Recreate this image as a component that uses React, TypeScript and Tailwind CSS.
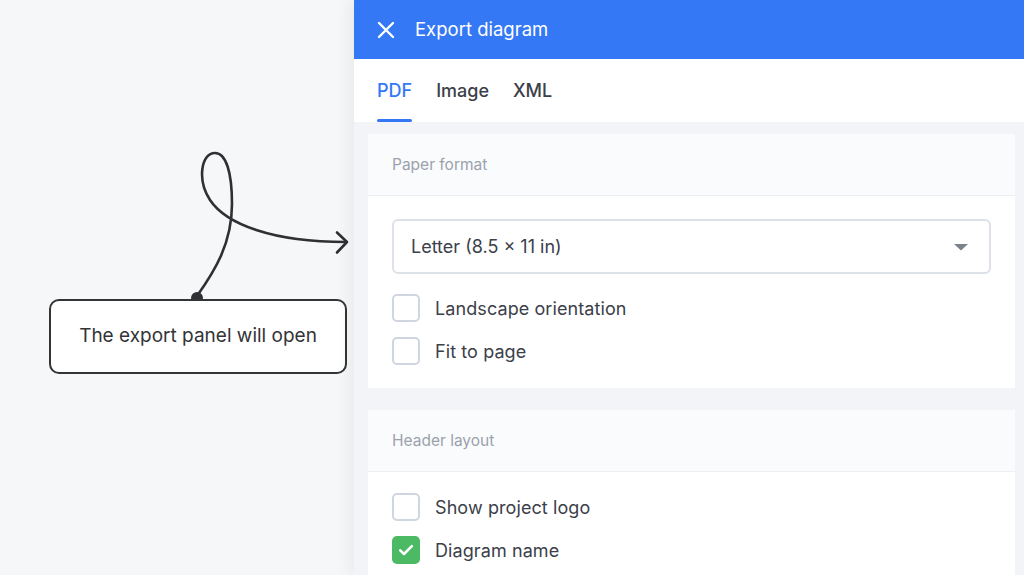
import React from "react";

function Checkbox({ checked = false, label }: { checked?: boolean; label: string }) {
  return (
    <label className="flex items-center gap-[15px] h-[28px]">
      {checked ? (
        <span className="w-[28px] h-[28px] rounded-[5px] bg-[#4cb964] flex items-center justify-center">
          <svg width="18" height="18" viewBox="0 0 18 18" fill="none">
            <path d="M3.2 9.4l3.8 3.6L14.8 5.2" stroke="#fff" strokeWidth="2.6" strokeLinecap="round" strokeLinejoin="round" />
          </svg>
        </span>
      ) : (
        <span className="w-[28px] h-[28px] rounded-[5px] border-2 border-[#cfd6df] bg-white" />
      )}
      <span className="text-[18px] text-[#3b4049] tracking-[0.005em]">{label}</span>
    </label>
  );
}

function Card({ title, children, tight = false }: { title: string; children: React.ReactNode; tight?: boolean }) {
  return (
    <section className="bg-white">
      <div className="h-[62px] px-6 flex items-center bg-[#fafbfc] border-b border-[#eceff3] text-[15.5px] text-[#9aa2ad]">
        {title}
      </div>
      <div className={tight ? "px-6 pt-[21px] pb-[24px]" : "px-6 pt-[23px] pb-[23px]"}>{children}</div>
    </section>
  );
}

export default function App() {
  return (
    <div className="w-[1024px] h-[575px] overflow-hidden flex bg-[#f6f7f9]" style={{ fontFamily: "Inter, 'Noto Sans', sans-serif" }}>
      <div className="relative w-[354px] shrink-0">
        <svg className="absolute left-0 top-0" width="354" height="575" viewBox="0 0 354 575" fill="none">
          <path
            d="M197 296 C 214 272, 232 244, 232 204 C 232 172, 226 153, 215 153 C 201 153, 197 180, 210 200 C 226 224, 272 242, 346 242"
            stroke="#2f3033"
            strokeWidth="2.6"
            strokeLinecap="round"
          />
          <path d="M337 232.5 L347 242 L337 252.5" stroke="#2f3033" strokeWidth="2.6" strokeLinecap="round" strokeLinejoin="round" />
          <circle cx="197" cy="298" r="6" fill="#2f3033" />
        </svg>
        <div className="absolute left-[49px] top-[299px] w-[298px] h-[75px] rounded-[10px] border-2 border-[#333436] bg-white flex items-center justify-center text-[19px] text-[#333436]">
          The export panel will open
        </div>
      </div>

      <aside className="flex-1 flex flex-col bg-[#f3f4f7] shadow-[-6px_0_14px_rgba(0,0,0,0.05)] z-10">
        <header className="h-[59px] shrink-0 bg-[#3578f6] flex items-center pl-[23px] gap-[20px] text-white">
          <svg width="18" height="18" viewBox="0 0 18 18" fill="none">
            <path d="M2 2l14 14M16 2L2 16" stroke="#fff" strokeWidth="2.4" strokeLinecap="round" />
          </svg>
          <span className="text-[18.5px]">Export diagram</span>
        </header>

        <nav className="h-[63px] shrink-0 bg-white flex items-stretch pl-[23px] gap-[24px] text-[18px] font-medium">
          <div className="flex flex-col justify-end">
            <span className="text-[#3578f6] pb-[15px]">PDF</span>
            <span className="h-[3px] bg-[#3578f6] rounded-full" />
          </div>
          <div className="flex flex-col justify-end">
            <span className="text-[#3b4049] pb-[18px]">Image</span>
          </div>
          <div className="flex flex-col justify-end">
            <span className="text-[#3b4049] pb-[18px]">XML</span>
          </div>
        </nav>

        <div className="flex-1 pt-[12px] pl-[14px] pr-[9px] flex flex-col gap-[22px]">
          <Card title="Paper format">
            <div className="h-[55px] rounded-[6px] border-2 border-[#dde2e8] flex items-center justify-between pl-[17px] pr-[20px] text-[18px] text-[#3b4049]">
              <span>Letter (8.5 × 11 in)</span>
              <svg width="16" height="8" viewBox="0 0 16 8">
                <path d="M1 1h14L8 7.5z" fill="#7b828c" />
              </svg>
            </div>
            <div className="mt-[20px] flex flex-col gap-[15px]">
              <Checkbox label="Landscape orientation" />
              <Checkbox label="Fit to page" />
            </div>
          </Card>
          <Card title="Header layout" tight>
            <div className="flex flex-col gap-[15px]">
              <Checkbox label="Show project logo" />
              <Checkbox label="Diagram name" checked />
            </div>
          </Card>
        </div>
      </aside>
    </div>
  );
}
